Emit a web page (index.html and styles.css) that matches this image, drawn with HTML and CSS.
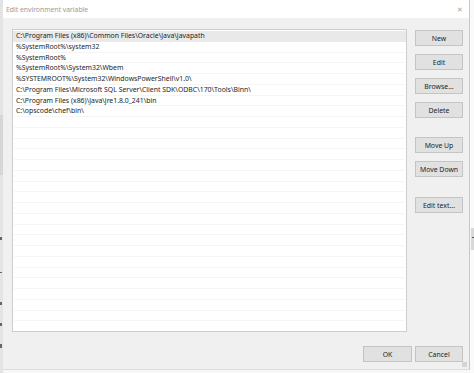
FILE: index.html
```html
<!DOCTYPE html>
<html lang="en">
<head>
    <meta charset="UTF-8">
    <title>Edit environment variable</title>
    <link rel="stylesheet" href="styles.css">
</head>
<body>

<div class="desktop">
    <!-- bits of the window behind, left side -->
    <div class="behind-left">
        <span class="scroll"></span>
        <span class="mark m1"></span>
        <span class="mark m2"></span>
        <span class="mark m3"></span>
        <span class="mark m4"></span>
        <span class="mark m5"></span>
    </div>

    <div class="dialog">
        <div class="titlebar">
            <span class="title">Edit environment variable</span>
            <span class="close">&#x2715;</span>
        </div>

        <div class="content">
            <div class="main">
                <ul class="list" id="pathList"></ul>

                <div class="side-buttons">
                    <button class="btn">New</button>
                    <button class="btn">Edit</button>
                    <button class="btn">Browse...</button>
                    <button class="btn">Delete</button>
                    <button class="btn group">Move Up</button>
                    <button class="btn">Move Down</button>
                    <button class="btn group-wide">Edit text...</button>
                </div>
            </div>

            <div class="footer">
                <button class="btn ok">OK</button>
                <button class="btn">Cancel</button>
            </div>
        </div>
        <span class="grip"></span>
    </div>

    <div class="behind-right">
        <span class="rscroll"></span>
        <span class="rmark"></span>
    </div>
</div>

<script>
    const paths = [
        "C:\\Program Files (x86)\\Common Files\\Oracle\\Java\\javapath",
        "%SystemRoot%\\system32",
        "%SystemRoot%",
        "%SystemRoot%\\System32\\Wbem",
        "%SYSTEMROOT%\\System32\\WindowsPowerShell\\v1.0\\",
        "C:\\Program Files\\Microsoft SQL Server\\Client SDK\\ODBC\\170\\Tools\\Binn\\",
        "C:\\Program Files (x86)\\Java\\jre1.8.0_241\\bin",
        "C:\\opscode\\chef\\bin\\"
    ];

    // Fill the list, empty rows keep their separator lines
    const list = document.getElementById('pathList');
    for (let i = 0; i < 28; i++) {
        const row = document.createElement('li');
        row.className = i === 0 ? 'row selected' : 'row';
        row.textContent = paths[i] || '';
        list.appendChild(row);
    }
</script>

</body>
</html>
```

FILE: styles.css
```css
/* Basic Styles */
body {
    margin: 0;
    padding: 0;
    font-family: "Noto Sans", "Open Sans", sans-serif;
    background-color: #f7f7f7;
}

.desktop {
    display: flex;
    width: 474px;
    height: 373px;
    overflow: hidden;
}

/* Window behind the dialog */
.behind-left {
    position: relative;
    width: 3px;
    background-color: #e4e4e4;
}

.scroll {
    position: absolute;
    left: 0;
    top: 115px;
    width: 3px;
    height: 60px;
    background-color: #d6d6d6;
}

.mark {
    position: absolute;
    left: 0;
    width: 2px;
    height: 3px;
    background-color: #666;
}

.m1 { top: 237px; }
.m2 { top: 272px; height: 1px; }
.m3 { top: 302px; }
.m4 { top: 323px; }
.m5 { top: 344px; height: 4px; }

.behind-right {
    position: relative;
    flex: 1;
    background-color: #fafafa;
}

.rscroll {
    position: absolute;
    left: 1px;
    top: 228px;
    width: 3px;
    height: 22px;
    background-color: #d8d8d8;
}

.rmark {
    position: absolute;
    left: 2px;
    top: 237px;
    width: 2px;
    height: 1px;
    background-color: #555;
}

/* Dialog */
.dialog {
    position: relative;
    width: 466px;
    height: 369px;
    background-color: #f0f0f0;
    border-right: 1px solid #c8c8c8;
    border-bottom: 1px solid #dcdcdc;
    display: flex;
    flex-direction: column;
}

.titlebar {
    height: 18px;
    background-color: #ffffff;
    display: flex;
    align-items: center;
    justify-content: space-between;
    padding: 0 6px 0 3px;
}

.title {
    font-size: 6.8px;
    color: #9a9a9a;
}

.close {
    font-size: 7px;
    color: #a5a5a5;
}

.content {
    padding: 11px 6px 0 9px;
}

.main {
    display: flex;
    gap: 8px;
}

.list {
    list-style: none;
    margin: 0;
    padding: 1px 0 0 0;
    width: 393px;
    height: 300px;
    background-color: #ffffff;
    border: 1px solid #cdcdcd;
    overflow: hidden;
}

.row {
    height: 10.75px;
    line-height: 10.75px;
    padding: 0 2px;
    font-size: 6.9px;
    color: #1e1e1e;
    white-space: nowrap;
    box-sizing: border-box;
    border-bottom: 1px solid #f5f5f5;
    margin: 0 1px;
}

.row.selected {
    background-color: #e9e9e9;
    margin: 0;
    padding: 0 3px;
    border-bottom-color: #e9e9e9;
}

.side-buttons {
    display: flex;
    flex-direction: column;
    gap: 8px;
    padding-top: 1px;
}

.btn {
    width: 48px;
    height: 16px;
    padding: 0;
    margin: 0;
    font-family: "Noto Sans", "Open Sans", sans-serif;
    font-size: 6.9px;
    color: #1e1e1e;
    background-color: #e1e1e1;
    border: 1px solid #c4c4c4;
    cursor: pointer;
}

.btn.group {
    margin-top: 11px;
}

.btn.group-wide {
    margin-top: 12px;
}

.footer {
    display: flex;
    justify-content: flex-end;
    gap: 3px;
    margin-top: 14px;
}

.btn.ok {
    width: 49px;
}

/* Resize grip */
.grip {
    position: absolute;
    right: 2px;
    bottom: 2px;
    width: 5px;
    height: 5px;
    background: radial-gradient(circle, #b5b5b5 0.6px, transparent 0.8px) 0 0 / 2px 2px;
}
```
